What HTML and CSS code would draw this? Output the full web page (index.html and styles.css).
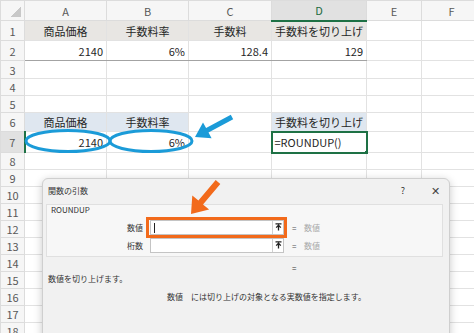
FILE: index.html
```html
<!DOCTYPE html>
<html lang="ja">

<head>
    <meta charset="UTF-8">
    <meta name="viewport" content="width=device-width, initial-scale=1.0">
    <title>ROUNDUP</title>
    <link rel="stylesheet" href="styles.css">
</head>

<body>
    <div class="sheet">
        <table class="grid">
            <colgroup>
                <col class="c-head">
                <col class="c-a">
                <col class="c-b">
                <col class="c-c">
                <col class="c-d">
                <col class="c-e">
                <col class="c-f">
            </colgroup>
            <tr class="h-col">
                <th class="corner"></th>
                <th>A</th>
                <th>B</th>
                <th>C</th>
                <th class="col-sel">D</th>
                <th>E</th>
                <th>F</th>
            </tr>
            <tr class="r-20">
                <th>1</th>
                <td class="title">商品価格</td>
                <td class="title">手数料率</td>
                <td class="title">手数料</td>
                <td class="title">手数料を切り上げ</td>
                <td></td>
                <td></td>
            </tr>
            <tr class="r-20">
                <th>2</th>
                <td class="num last">2140</td>
                <td class="num last">6%</td>
                <td class="num last">128.4</td>
                <td class="num last">129</td>
                <td></td>
                <td></td>
            </tr>
            <tr class="r-18">
                <th>3</th><td></td><td></td><td></td><td></td><td></td><td></td>
            </tr>
            <tr>
                <th>4</th><td></td><td></td><td></td><td></td><td></td><td></td>
            </tr>
            <tr>
                <th>5</th><td></td><td></td><td></td><td></td><td></td><td></td>
            </tr>
            <tr class="r-19">
                <th>6</th>
                <td class="label">商品価格</td>
                <td class="label">手数料率</td>
                <td></td>
                <td class="label">手数料を切り上げ</td>
                <td></td>
                <td></td>
            </tr>
            <tr class="r-21">
                <th class="row-sel">7</th>
                <td class="num">2140</td>
                <td class="num">6%</td>
                <td></td>
                <td class="active">=ROUNDUP()<span class="handle"></span></td>
                <td></td>
                <td></td>
            </tr>
            <tr><th>8</th><td></td><td></td><td></td><td></td><td></td><td></td></tr>
            <tr><th>9</th><td></td><td></td><td></td><td></td><td></td><td></td></tr>
            <tr><th>10</th><td></td><td></td><td></td><td></td><td></td><td></td></tr>
            <tr><th>11</th><td></td><td></td><td></td><td></td><td></td><td></td></tr>
            <tr><th>12</th><td></td><td></td><td></td><td></td><td></td><td></td></tr>
            <tr><th>13</th><td></td><td></td><td></td><td></td><td></td><td></td></tr>
            <tr><th>14</th><td></td><td></td><td></td><td></td><td></td><td></td></tr>
            <tr><th>15</th><td></td><td></td><td></td><td></td><td></td><td></td></tr>
            <tr><th>16</th><td></td><td></td><td></td><td></td><td></td><td></td></tr>
            <tr><th>17</th><td></td><td></td><td></td><td></td><td></td><td></td></tr>
            <tr><th>18</th><td></td><td></td><td></td><td></td><td></td><td></td></tr>
        </table>

        <!-- 関数の引数ダイアログ -->
        <div class="dialog">
            <div class="dlg-title">
                <span>関数の引数</span>
                <span class="dlg-btns"><span class="help">?</span><span class="close">✕</span></span>
            </div>
            <div class="args">
                <div class="fn-name">ROUNDUP</div>
                <div class="arg">
                    <span class="arg-label">数値</span>
                    <span class="field"><span class="caret"></span><span class="pick"><svg width="7" height="8" viewBox="0 0 7 8"><path d="M0.5 0.8H6.5M3.5 7.5V3.2M1.2 4.6L3.5 2.2L5.8 4.6" fill="none" stroke="#222" stroke-width="1.3"/></svg></span></span>
                    <span class="eq">=</span>
                    <span class="val">数値</span>
                </div>
                <div class="arg">
                    <span class="arg-label">桁数</span>
                    <span class="field"><span class="pick"><svg width="7" height="8" viewBox="0 0 7 8"><path d="M0.5 0.8H6.5M3.5 7.5V3.2M1.2 4.6L3.5 2.2L5.8 4.6" fill="none" stroke="#222" stroke-width="1.3"/></svg></span></span>
                    <span class="eq">=</span>
                    <span class="val">数値</span>
                </div>
            </div>
            <div class="result">=</div>
            <p class="desc">数値を切り上げます。</p>
            <p class="arg-desc">数値　には切り上げの対象となる実数値を指定します。</p>
        </div>

        <!-- 注釈 (丸・矢印・枠) -->
        <svg class="marks" width="474" height="333" viewBox="0 0 474 333">
            <ellipse cx="68" cy="141" rx="42" ry="10.5" fill="none" stroke="#1b9bd8" stroke-width="3" />
            <ellipse cx="151" cy="141" rx="41" ry="10.5" fill="none" stroke="#1b9bd8" stroke-width="3" />
            <polygon points="195,137 211.6,138.2 208.5,132.5 233.2,119.2 230.8,114.8 206.1,128.1 203,122.4" fill="#1b9bd8" />
            <rect x="147.5" y="218.5" width="138" height="18" fill="none" stroke="#f26a1b" stroke-width="3" />
            <polygon points="191,214 209.1,209.6 203,204.4 220.3,183.9 215.7,180.1 198.4,200.6 192.3,195.4" fill="#f26a1b" />
        </svg>
    </div>
</body>

</html>
```

FILE: styles.css
```css
* {
    box-sizing: border-box;
}

body {
    margin: 0;
    background: #fff;
    font-family: "Noto Sans CJK JP", "Noto Sans", sans-serif;
}

.sheet {
    position: relative;
    width: 474px;
    height: 333px;
    overflow: hidden;
}

/* シート */
.grid {
    border-collapse: collapse;
    table-layout: fixed;
    width: 481px;
    font-size: 11px;
    color: #262626;
}

.c-head { width: 24px; }
.c-a { width: 82px; }
.c-b { width: 82px; }
.c-c { width: 83px; }
.c-d { width: 95px; }
.c-e { width: 55px; }
.c-f { width: 60px; }

.grid tr {
    height: 17px;
}

.grid .h-col,
.grid .r-20 {
    height: 20px;
}

.grid .r-18 { height: 18px; }
.grid .r-19 { height: 19px; }
.grid .r-21 { height: 21px; }

.grid td,
.grid th {
    border: 1px solid #e2e2e2;
    padding: 0 3px;
    white-space: nowrap;
    overflow: hidden;
    line-height: 14px;
    font-weight: normal;
}

.grid th {
    background: #f6f6f6;
    color: #595959;
    text-align: center;
    border-color: #dcdcdc;
}

.grid .corner {
    background: linear-gradient(to bottom right, transparent 50%, #c8c8c8 50%) no-repeat right 3px bottom 3px / 11px 10px, #f6f6f6;
}

.grid .col-sel {
    background: #e1e1e1;
    color: #1d6b3e;
    border-bottom: 2px solid #1e7145;
}

.grid .row-sel {
    background: #e1e1e1;
    border-right: 2px solid #1e7145;
}

.title {
    background: #e8e6e3;
    text-align: center;
}

.label {
    background: #dfe7f0;
    text-align: center;
}

.num {
    text-align: right;
}

.grid .last {
    border-bottom: 1px solid #a3a3a3;
}

.grid .active {
    position: relative;
    border: 2px solid #1e7145;
    padding-left: 2px;
}

.handle {
    position: absolute;
    right: -3px;
    bottom: -3px;
    width: 5px;
    height: 5px;
    background: #1e7145;
    border: 1px solid #fff;
}

/* ダイアログ */
.dialog {
    position: absolute;
    left: 42px;
    top: 178px;
    width: 408px;
    height: 170px;
    background: #f1f1f1;
    border: 1px solid #cfcfcf;
    border-radius: 6px;
    box-shadow: 0 2px 8px rgba(0, 0, 0, 0.22);
    font-size: 8px;
    color: #333;
}

.dlg-title {
    height: 22px;
    display: flex;
    align-items: center;
    justify-content: space-between;
    padding-left: 5px;
}

.dlg-btns {
    display: flex;
    align-items: center;
    gap: 19px;
    margin-right: 6px;
}

.help {
    width: 10px;
    text-align: center;
    font-size: 9px;
}

.close {
    width: 16px;
    text-align: center;
    font-size: 11px;
    color: #444;
}

.args {
    margin: 3px 6px 0 3px;
    height: 53px;
    background: #f7f7f7;
    border: 1px solid #e0e0e0;
}

.fn-name {
    height: 13px;
    line-height: 9px;
    padding-left: 4px;
    font-size: 8px;
}

.arg {
    height: 18px;
    display: flex;
    align-items: center;
}

.arg-label {
    width: 96px;
    margin-right: 7px;
    text-align: right;
}

.field {
    position: relative;
    width: 134px;
    height: 15px;
    background: #fff;
    border: 1px solid #c4c4c4;
    display: flex;
    justify-content: flex-end;
}

.caret {
    position: absolute;
    left: 3px;
    top: 2px;
    width: 1px;
    height: 10px;
    background: #222;
}

.pick {
    width: 11px;
    border-left: 1px solid #d0d0d0;
    display: flex;
    align-items: center;
    justify-content: center;
}

.eq {
    margin-left: 8px;
    width: 4px;
    color: #555;
}

.val {
    margin-left: 8px;
    color: #a8a8a8;
}

.result {
    margin-top: 6px;
    height: 10px;
    line-height: 10px;
    padding-left: 249px;
}

.desc {
    margin: 1px 0 0;
    height: 10px;
    line-height: 10px;
    padding-left: 5px;
}

.arg-desc {
    margin: 8px 0 0;
    height: 10px;
    line-height: 10px;
    padding-left: 124px;
}

/* 注釈 */
.marks {
    position: absolute;
    left: 0;
    top: 0;
    pointer-events: none;
}
```
